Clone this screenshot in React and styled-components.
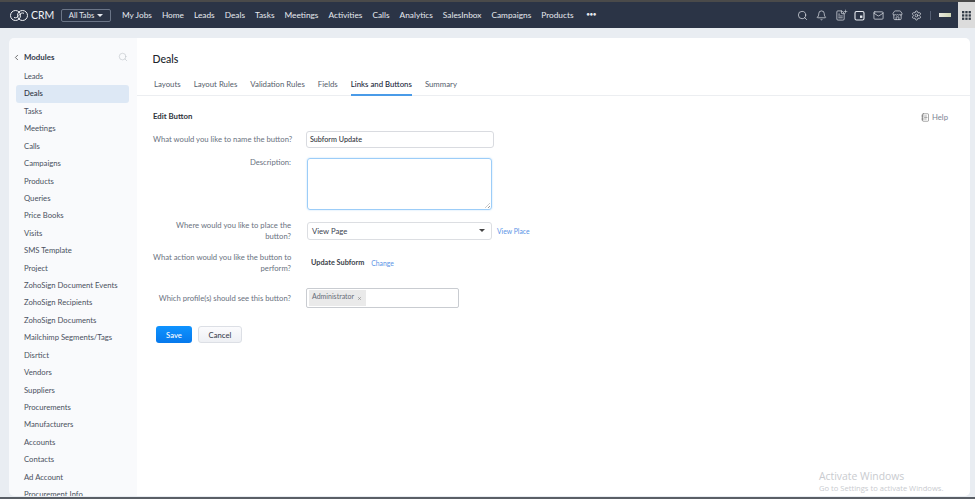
import React from "react";
import styled, { createGlobalStyle } from "styled-components";
import { Search, Bell, Mail, Store, Settings, ChevronLeft, NotebookText, X, FileText, Plus } from "lucide-react";

const Global = createGlobalStyle`
  html, body { margin: 0; padding: 0; height: 100%; overflow: hidden; background: #e9edf2; }
  #root { height: 499px; }
  * { box-sizing: border-box; }
  body { font-family: Lato, "Open Sans", sans-serif; font-size: 7.7px; color: #3c4350; }
`;

const Page = styled.div`
  position: relative;
  width: 975px;
  height: 499px;
  display: flex;
  flex-direction: column;
  overflow: hidden;
  background: #e9edf2;
  border-top: 2px solid #4a4a4a;
  border-bottom: 2px solid #5a5f66;
`;

const TopBar = styled.header`
  height: 26px;
  flex: none;
  display: flex;
  align-items: center;
  background: #2b3446;
  color: #e6e9ef;
`;

const Logo = styled.div`
  width: 61px;
  padding-left: 10px;
  display: flex;
  align-items: center;
  gap: 3px;
  font-size: 10.5px;
  color: #f1f3f6;
`;

const AllTabs = styled.div`
  width: 50px;
  height: 13px;
  border: 1px solid #6b7587;
  border-radius: 2px;
  display: flex;
  align-items: center;
  justify-content: center;
  gap: 3px;
  font-size: 7.6px;
  margin-right: 11px;
`;

const Caret = styled.span`
  width: 0;
  height: 0;
  border-left: 3px solid transparent;
  border-right: 3px solid transparent;
  border-top: 3px solid ${p => p.$color || "#e6e9ef"};
`;

const Nav = styled.nav`
  display: flex;
  align-items: center;
  gap: 10px;
  flex: 1;
  font-size: 8.3px;
`;

const Dots = styled.span`
  margin-left: 3px;
  font-size: 5.5px;
  font-weight: 900;
  line-height: 1;
`;

const IconRow = styled.div`
  display: flex;
  align-items: center;
  gap: 8px;
  margin-right: 7px;
  color: #e6e9ef;
`;

const Divider = styled.span`
  width: 1px;
  height: 9px;
  background: #566074;
`;

const Avatar = styled.span`
  width: 12px;
  height: 4px;
  background: linear-gradient(90deg, #e8e8e0, #cfd6b4);
`;

const GridTile = styled.div`
  width: 17px;
  height: 26px;
  display: grid;
  place-items: center;
  background: #dcdcdc;
`;

const Body = styled.div`
  flex: 1;
  min-height: 0;
  display: flex;
  padding: 10px 5px 1.5px 9px;
`;

const Sidebar = styled.aside`
  width: 128px;
  flex: none;
  background: #f9fafc;
  border-radius: 5px 0 0 5px;
  overflow: hidden;
  padding: 0 8px 0 7px;
`;

const SideHead = styled.div`
  height: 20px;
  margin: 10px 0 0;
  display: flex;
  align-items: center;
  font-weight: 700;
  font-size: 7.9px;
  color: #33394a;
  transform: translateY(-1px);
  svg:first-child { margin-left: -4px; margin-right: 3px; color: #444; }
  svg:last-child { margin-left: auto; margin-right: 1px; color: #b9bdc4; }
`;

const SideList = styled.ul`
  list-style: none;
  margin: 0;
  padding: 0;
`;

const SideItem = styled.li`
  height: 17.43px;
  line-height: 17.43px;
  padding-left: 8px;
  border-radius: 3px;
  white-space: nowrap;
  color: ${p => (p.$active ? "#2f3644" : "#4a5160")};
  font-weight: ${p => (p.$active ? 500 : 400)};
  background: ${p => (p.$active ? "#dde8f5" : "transparent")};
`;

const Main = styled.main`
  flex: 1;
  position: relative;
  background: #fff;
  border-radius: 0 5px 5px 0;
  display: flex;
  flex-direction: column;
`;

const Title = styled.h1`
  margin: 14px 0 0 15.5px;
  font-size: 10.5px;
  line-height: 14px;
  font-weight: 500;
  color: #20242c;
`;

const Tabs = styled.div`
  display: flex;
  gap: 13px;
  height: 23px;
  padding-left: 17px;
  margin-top: 7px;
  font-size: 7.8px;
  border-bottom: 1px solid #eceef1;
`;

const Tab = styled.div`
  height: 23px;
  padding-top: 5px;
  line-height: 12px;
  color: ${p => (p.$active ? "#20263a" : "#555d6b")};
  font-weight: ${p => (p.$active ? 500 : 400)};
  border-bottom: ${p => (p.$active ? "2px solid #4a9be8" : "none")};
`;

const Help = styled.div`
  position: absolute;
  top: 74px;
  right: 22px;
  display: flex;
  align-items: center;
  gap: 2px;
  color: #7d8593;
  svg { color: #666; }
`;

const Form = styled.section`
  padding: 15px 0 0 16px;
`;

const SectionTitle = styled.h2`
  margin: 0 0 10px;
  font-size: 7.8px;
  line-height: 10px;
  font-weight: 700;
  color: #30343c;
`;

const Row = styled.div`
  display: grid;
  grid-template-columns: 138px 1fr;
  column-gap: 15px;
  align-items: ${p => p.$align || "center"};
  margin-top: ${p => p.$top || 0}px;
`;

const Label = styled.label`
  text-align: right;
  line-height: 10.5px;
  white-space: nowrap;
  color: #6a7280;
  margin-top: ${p => p.$shift || 0}px;
`;

const TextInput = styled.div`
  width: 188px;
  height: 17px;
  border: 1px solid #d9dbe0;
  border-radius: 3px;
  padding-left: 3px;
  line-height: 15px;
  font-size: 7.2px;
  color: #30343c;
  font-weight: 500;
`;

const TextArea = styled.div`
  position: relative;
  width: 185px;
  height: 52px;
  margin-left: 1px;
  border: 1.5px solid #9ccdf8;
  border-radius: 3px;
  box-shadow: 0 0 2px #b9dcfb;
  &::after {
    content: "";
    position: absolute;
    right: 1px;
    bottom: 1px;
    width: 5px;
    height: 5px;
    background: repeating-linear-gradient(135deg, transparent 0 1px, #999 1px 2px);
    clip-path: polygon(100% 0, 100% 100%, 0 100%);
  }
`;

const FieldLine = styled.div`
  display: flex;
  align-items: center;
  gap: 5px;
`;

const Select = styled.div`
  width: 185px;
  height: 18px;
  margin-left: 1px;
  padding: 0 6px 0 4px;
  border: 1px solid #dcdee2;
  border-radius: 3px;
  display: flex;
  align-items: center;
  justify-content: space-between;
  color: #3c4350;
`;

const LinkText = styled.a`
  color: #5a93e6;
  font-size: 6.8px;
`;

const ActionName = styled.span`
  margin-left: 5px;
  margin-right: 2px;
  font-size: 7.3px;
  font-weight: 700;
  color: #3a3f49;
`;

const TagBox = styled.div`
  width: 153px;
  height: 20px;
  padding: 1px 2px;
  border: 1px solid #c9ccd1;
  border-radius: 2px;
  display: flex;
`;

const Tag = styled.span`
  width: 57px;
  height: 16px;
  background: #eaeaea;
  padding-left: 3px;
  line-height: 13px;
  font-size: 7px;
  color: #666c77;
  display: flex;
  gap: 3px;
  svg { flex: none; margin-top: 6px; color: #666; }
`;

const Actions = styled.div`
  display: flex;
  gap: 6px;
  margin: 18px 0 0 3px;
`;

const Button = styled.button`
  height: 17px;
  width: ${p => p.$w}px;
  padding: 0;
  border-radius: 3px;
  font: 500 7.7px Lato, sans-serif;
  border: ${p => (p.$primary ? "none" : "1px solid #dcdfe5")};
  color: ${p => (p.$primary ? "#fff" : "#3c4350")};
  background: ${p => (p.$primary ? "linear-gradient(#0f93ff, #0679ec)" : "linear-gradient(#fbfbfd, #eef0f4)")};
`;

const Watermark = styled.div`
  position: absolute;
  left: 682px;
  bottom: 2px;
  color: #c9cbcf;
  font-family: "Open Sans", sans-serif;
  font-size: 7.6px;
  line-height: 11px;
  strong { display: block; font-weight: 400; font-size: 10.4px; line-height: 13px; }
`;

const navItems = ["My Jobs","Home","Leads","Deals","Tasks","Meetings","Activities","Calls","Analytics","SalesInbox","Campaigns","Products"];
const modules = ["Leads","Deals","Tasks","Meetings","Calls","Campaigns","Products","Queries","Price Books","Visits","SMS Template","Project","ZohoSign Document Events","ZohoSign Recipients","ZohoSign Documents","Mailchimp Segments/Tags","Disrtict","Vendors","Suppliers","Procurements","Manufacturers","Accounts","Contacts","Ad Account","Procurement Info"];
const tabs = ["Layouts","Layout Rules","Validation Rules","Fields","Links and Buttons","Summary"];

const CrmLogo = () => (
  <svg width="18" height="11" viewBox="0 0 18 11" fill="none" stroke="#f1f3f6" strokeWidth="1">
    <ellipse cx="5.5" cy="5.5" rx="5" ry="5" />
    <ellipse cx="12.5" cy="5.5" rx="5" ry="5" />
    <path d="M4 7.5c2 1 3.5-.5 5-2.2s3-3 5-2" />
  </svg>
);

const NoteIconWrap = styled.span`
  position: relative;
  display: flex;
  svg:last-child { position: absolute; right: -2px; top: -1px; }
`;

const NoteIcon = () => (
  <NoteIconWrap>
    <FileText size={11} strokeWidth={1.5} />
    <Plus size={5} strokeWidth={2.5} />
  </NoteIconWrap>
);

const CalIcon = () => (
  <svg width="11" height="11" viewBox="0 0 11 11" fill="none" stroke="currentColor" strokeWidth="1.1">
    <rect x="1" y="1.5" width="9" height="8.5" rx="1.5" />
    <rect x="6" y="5.5" width="2.4" height="2.4" fill="currentColor" stroke="none" />
  </svg>
);

const AppGrid = () => (
  <svg width="9" height="9" viewBox="0 0 9 9" fill="#333c48">
    {[0, 3.3, 6.6].flatMap(y => [0, 3.3, 6.6].map(x => <rect key={`${x}-${y}`} x={x} y={y} width="2.3" height="2.3" />))}
  </svg>
);

export default function App() {
  return (
    <Page>
      <Global />
      <TopBar>
        <Logo><CrmLogo />CRM</Logo>
        <AllTabs>All Tabs <Caret /></AllTabs>
        <Nav>
          {navItems.map(n => <span key={n}>{n}</span>)}
          <Dots>•••</Dots>
        </Nav>
        <IconRow>
          <Search size={11} strokeWidth={1.5} />
          <Bell size={11} strokeWidth={1.5} />
          <NoteIcon />
          <CalIcon />
          <Mail size={11} strokeWidth={1.5} />
          <Store size={11} strokeWidth={1.5} />
          <Settings size={11} strokeWidth={1.5} />
          <Divider />
          <Avatar />
        </IconRow>
        <GridTile><AppGrid /></GridTile>
      </TopBar>
      <Body>
        <Sidebar>
          <SideHead>
            <ChevronLeft size={9} strokeWidth={2} />
            Modules
            <Search size={10} strokeWidth={1.3} />
          </SideHead>
          <SideList>
            {modules.map(m => <SideItem key={m} $active={m === "Deals"}>{m}</SideItem>)}
          </SideList>
        </Sidebar>
        <Main>
          <Title>Deals</Title>
          <Tabs>
            {tabs.map(t => <Tab key={t} $active={t === "Links and Buttons"}>{t}</Tab>)}
          </Tabs>
          <Help><NotebookText size={9} strokeWidth={1.5} />Help</Help>
          <Form>
            <SectionTitle>Edit Button</SectionTitle>
            <Row>
              <Label>What would you like to name the button?</Label>
              <TextInput>Subform Update</TextInput>
            </Row>
            <Row $align="start" $top={10}>
              <Label $shift={-1}>Description:</Label>
              <TextArea />
            </Row>
            <Row $top={10}>
              <Label>Where would you like to place the<br />button?</Label>
              <FieldLine>
                <Select>View Page <Caret $color="#444" /></Select>
                <LinkText>View Place</LinkText>
              </FieldLine>
            </Row>
            <Row $top={11}>
              <Label>What action would you like the button to<br />perform?</Label>
              <FieldLine>
                <ActionName>Update Subform</ActionName>
                <LinkText>Change</LinkText>
              </FieldLine>
            </Row>
            <Row $top={15}>
              <Label>Which profile(s) should see this button?</Label>
              <TagBox>
                <Tag>Administrator <X size={5} strokeWidth={2} /></Tag>
              </TagBox>
            </Row>
            <Actions>
              <Button $primary $w={36}>Save</Button>
              <Button $w={44}>Cancel</Button>
            </Actions>
          </Form>
          <Watermark>
            <strong>Activate Windows</strong>
            Go to Settings to activate Windows.
          </Watermark>
        </Main>
      </Body>
    </Page>
  );
}
